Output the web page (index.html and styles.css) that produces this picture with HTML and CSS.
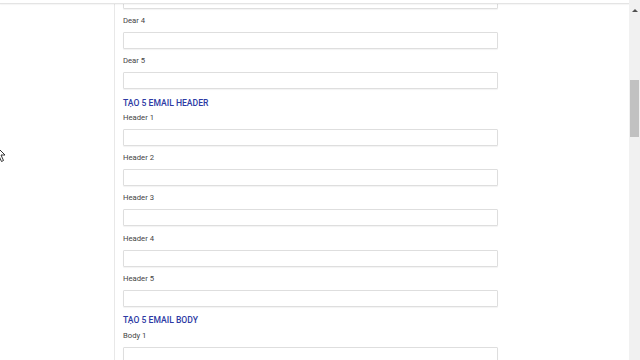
FILE: index.html
```html
<!DOCTYPE html>
<html lang="vi">
<head>
<meta charset="utf-8">
<title>Form</title>
<link rel="stylesheet" href="styles.css">
</head>
<body>
<div class="topbar"></div>
<div class="page">
  <aside class="sidebar"></aside>
  <main class="content">
    <form class="form">
      <div class="field field-first"><input class="input" type="text" aria-label="Dear 3"></div>
      <div class="field"><label class="label">Dear 4</label><input class="input" type="text"></div>
      <div class="field"><label class="label">Dear 5</label><input class="input" type="text"></div>
      <h2 class="section-title">TẠO 5 EMAIL HEADER</h2>
      <div class="field"><label class="label">Header 1</label><input class="input" type="text"></div>
      <div class="field"><label class="label">Header 2</label><input class="input" type="text"></div>
      <div class="field"><label class="label">Header 3</label><input class="input" type="text"></div>
      <div class="field"><label class="label">Header 4</label><input class="input" type="text"></div>
      <div class="field"><label class="label">Header 5</label><input class="input" type="text"></div>
      <h2 class="section-title">TẠO 5 EMAIL BODY</h2>
      <div class="field"><label class="label">Body 1</label><input class="input" type="text"></div>
    </form>
  </main>
  <div class="scrollbar">
    <div class="scroll-arrow"></div>
    <div class="scroll-thumb"></div>
  </div>
</div>
<svg class="cursor" width="12" height="18" viewBox="0 0 12 18">
  <path d="M1 1 L1 14 L4 11 L6.5 16.5 L8.5 15.5 L6 10 L10 10 Z" fill="#ffffff" stroke="#333333" stroke-width="1" stroke-linejoin="round"/>
</svg>
</body>
</html>
```
FILE: styles.css
```css
html, body {
  margin: 0;
  padding: 0;
  height: 360px;
  overflow: hidden;
  background: #ffffff;
  font-family: Roboto, "Liberation Sans", Arial, sans-serif;
}

.topbar {
  position: fixed;
  top: 0;
  left: 0;
  right: 11px;
  height: 3px;
  background: #ffffff;
  border-bottom: 1px solid #e4e4e4;
  box-shadow: 0 1px 1px rgba(0, 0, 0, 0.04);
  z-index: 5;
}

.page {
  display: flex;
  height: 360px;
}

.sidebar {
  width: 114px;
  flex: none;
}

.content {
  flex: 1;
  border-left: 1px solid #e8e8e8;
  padding-left: 8px;
  overflow: hidden;
}

.form {
  display: flex;
  flex-direction: column;
}

.field {
  display: flex;
  flex-direction: column;
  margin-bottom: 6.1px;
}

.field-first {
  margin-top: -8px;
}

.label {
  font-size: 7.7px;
  line-height: 12px;
  height: 12px;
  color: #444444;
  margin-bottom: 5px;
}

.input {
  box-sizing: border-box;
  width: 375px;
  height: 17px;
  margin: 0;
  padding: 0 6px;
  border: 1px solid #dedede;
  border-radius: 1px;
  background: #ffffff;
  box-shadow: 0 1px 1px rgba(0, 0, 0, 0.05);
  outline: none;
}

.section-title {
  margin: 1.5px 0 3.5px;
  font-size: 8.6px;
  line-height: 12px;
  font-weight: 500;
  color: #2d3aa4;
}

.scrollbar {
  width: 11px;
  flex: none;
  background: #f1f1f1;
  display: flex;
  flex-direction: column;
  align-items: center;
}

.scroll-arrow {
  margin-top: 9px;
  width: 0;
  height: 0;
  border-left: 3px solid transparent;
  border-right: 3px solid transparent;
  border-bottom: 3px solid #505050;
}

.scroll-thumb {
  margin-top: 68px;
  width: 9px;
  height: 57px;
  background: #c1c1c1;
}

.cursor {
  position: absolute;
  left: -5px;
  top: 145px;
}
```
